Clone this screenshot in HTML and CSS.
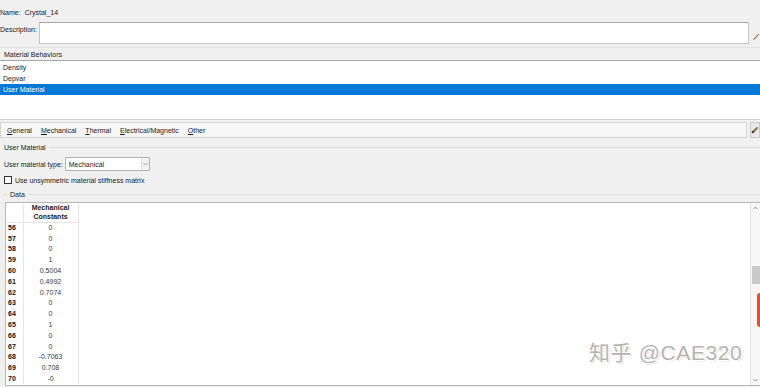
FILE: index.html
```html
<!DOCTYPE html>
<html lang="en">

<head>
    <meta charset="utf-8">
    <title>Edit Material</title>
    <link rel="stylesheet" href="styles.css">
</head>

<body>
    <div class="name-row">
        <span class="label">Name:</span>
        <span>Crystal_14</span>
    </div>

    <div class="desc-row">
        <span class="label desc-label">Description:</span>
        <div class="textbox"></div>
        <svg class="edit-icon" width="7" height="7" viewBox="0 0 7 7">
            <path d="M1 6 L6 1" stroke="#b98a5a" stroke-width="1.2" />
            <path d="M0.5 6.5 L1.8 5.2" stroke="#6b4a2a" stroke-width="1" />
        </svg>
    </div>

    <div class="behaviors-title">Material Behaviors</div>
    <ul class="behaviors">
        <li>Density</li>
        <li>Depvar</li>
        <li class="selected">User Material</li>
    </ul>

    <div class="menu-row">
        <div class="menubar">
            <span><u>G</u>eneral</span>
            <span><u>M</u>echanical</span>
            <span><u>T</u>hermal</span>
            <span><u>E</u>lectrical/Magnetic</span>
            <span><u>O</u>ther</span>
        </div>
        <div class="menu-btn">
            <svg width="8" height="8" viewBox="0 0 8 8">
                <path d="M2 6 L6 2" stroke="#8a6a4a" stroke-width="2" stroke-linecap="round" />
                <circle cx="2" cy="6" r="1.3" fill="#5a3a20" />
            </svg>
        </div>
    </div>

    <div class="legend um-legend"><span>User Material</span></div>

    <div class="type-row">
        <span>User material type:</span>
        <div class="combo">
            <span class="combo-text">Mechanical</span>
            <span class="combo-arrow">
                <svg width="5" height="4" viewBox="0 0 5 4">
                    <path d="M0.5 1 L2.5 3 L4.5 1" fill="none" stroke="#888" stroke-width="0.8" />
                </svg>
            </span>
        </div>
    </div>

    <div class="check-row">
        <span class="checkbox"></span>
        <span>Use unsymmetric material stiffness matrix</span>
    </div>

    <div class="legend data-legend"><span>Data</span></div>

    <div class="data-box">
        <table class="data-table">
            <tr>
                <th class="corner"></th>
                <th class="col-head">Mechanical<br>Constants</th>
            </tr>
            <tr><td class="row-num">56</td><td>0</td></tr>
            <tr><td class="row-num">57</td><td>0</td></tr>
            <tr><td class="row-num">58</td><td>0</td></tr>
            <tr><td class="row-num">59</td><td>1</td></tr>
            <tr><td class="row-num">60</td><td>0.5004</td></tr>
            <tr><td class="row-num">61</td><td>0.4992</td></tr>
            <tr><td class="row-num">62</td><td>0.7074</td></tr>
            <tr><td class="row-num">63</td><td>0</td></tr>
            <tr><td class="row-num">64</td><td>0</td></tr>
            <tr><td class="row-num">65</td><td>1</td></tr>
            <tr><td class="row-num">66</td><td>0</td></tr>
            <tr><td class="row-num">67</td><td>0</td></tr>
            <tr><td class="row-num">68</td><td>-0.7063</td></tr>
            <tr><td class="row-num">69</td><td>0.708</td></tr>
            <tr><td class="row-num">70</td><td>-0</td></tr>
        </table>
        <div class="spacer"></div>
        <div class="scrollbar">
            <span class="arrow">
                <svg width="5" height="4" viewBox="0 0 5 4">
                    <path d="M0.5 3 L2.5 1 L4.5 3" fill="none" stroke="#777" stroke-width="0.8" />
                </svg>
            </span>
            <div class="track">
                <div class="thumb"></div>
            </div>
            <span class="arrow">
                <svg width="5" height="4" viewBox="0 0 5 4">
                    <path d="M0.5 1 L2.5 3 L4.5 1" fill="none" stroke="#777" stroke-width="0.8" />
                </svg>
            </span>
        </div>
    </div>

    <div class="side-tab"></div>
    <div class="watermark">知乎 @CAE320</div>
</body>

</html>
```

FILE: styles.css
```css
:root {
    --bg: #f0f0f0;
    --line: #dadada;
    --border: #b8b8b8;
    --select: #0078d7;
    --text: #1a1a1a;
}

*,
::before,
::after {
    box-sizing: border-box;
    margin: 0;
    padding: 0;
}

body {
    width: 760px;
    height: 387px;
    overflow: hidden;
    position: relative;
    background: var(--bg);
    color: var(--text);
    font: 7px/1 "Liberation Sans", Arial, sans-serif;
}

/* name + description */
.name-row {
    display: flex;
    align-items: center;
    gap: 4px;
    height: 22px;
    padding-top: 2px;
}

.desc-row {
    display: flex;
    height: 22px;
}

.desc-label {
    width: 39px;
    padding-top: 4px;
}

.textbox {
    width: 710px;
    height: 22px;
    background: #fff;
    border: 1px solid #c4c4c4;
    border-top-color: #a8a8a8;
}

.edit-icon {
    margin: 11px 0 0 4px;
}

/* behaviours list */
.behaviors-title {
    margin-top: 3px;
    height: 13px;
    padding: 3px 0 0 4px;
    border-top: 1px solid #e2e2e2;
}

.behaviors {
    list-style: none;
    height: 60px;
    padding-top: 1px;
    background: #fff;
    border-top: 1px solid #a9a9a9;
    border-bottom: 1px solid #cfcfcf;
}

.behaviors li {
    height: 11px;
    line-height: 11px;
    padding-left: 3px;
}

.behaviors .selected {
    background: var(--select);
    color: #fff;
}

/* menu */
.menu-row {
    display: flex;
    margin-top: 2px;
    height: 16px;
}

.menubar {
    width: 748px;
    display: flex;
    align-items: center;
    gap: 9px;
    padding-left: 6px;
    background: #f6f6f6;
    border: 1px solid #d4d4d4;
}

.menu-btn {
    width: 10px;
    margin-left: 3px;
    display: flex;
    align-items: center;
    justify-content: center;
    background: #e9e9e9;
    border: 1px solid #c9c9c9;
}

/* group titles */
.legend {
    display: flex;
    align-items: center;
    gap: 3px;
    height: 13px;
    padding-left: 4px;
}

.legend::after {
    content: "";
    flex: 1;
    border-top: 1px solid var(--line);
}

.um-legend {
    margin-top: 3px;
}

.data-legend {
    margin-top: 2px;
    height: 14px;
    padding-left: 4px;
}

.data-legend::before {
    content: "";
    width: 3px;
    border-top: 1px solid var(--line);
}

/* user material controls */
.type-row {
    display: flex;
    align-items: center;
    gap: 2px;
    margin-top: 3px;
    height: 14px;
    padding-left: 4px;
}

.combo {
    display: flex;
    width: 85px;
    height: 14px;
    background: #fff;
    border: 1px solid #b4b4b4;
}

.combo-text {
    flex: 1;
    padding: 3px 0 0 3px;
}

.combo-arrow {
    width: 8px;
    display: flex;
    align-items: center;
    justify-content: center;
    background: #f2f2f2;
    border-left: 1px solid #dcdcdc;
}

.check-row {
    display: flex;
    align-items: center;
    gap: 3px;
    margin-top: 4px;
    height: 10px;
    padding-left: 4px;
}

.checkbox {
    width: 8px;
    height: 8px;
    background: #fff;
    border: 1px solid #333;
}

/* data table */
.data-box {
    display: flex;
    margin: 1px 0 0 5px;
    height: 184px;
    background: #fff;
    border: 1px solid var(--border);
    border-right: none;
}

.data-table {
    border-collapse: collapse;
    align-self: flex-start;
}

.data-table th,
.data-table td {
    padding: 0;
    border-right: 1px solid #e6e6e6;
}

.data-table th {
    height: 19px;
    border-bottom: 1px solid #e6e6e6;
}

.corner {
    width: 17px;
}

.col-head {
    width: 55px;
    font-weight: bold;
    line-height: 9px;
}

.data-table td {
    height: 10.8px;
    text-align: center;
    color: #3a3a3a;
}

.data-table .row-num {
    text-align: left;
    padding-left: 2px;
    font-weight: bold;
    color: #111;
}

.spacer {
    flex: 1;
}

.scrollbar {
    width: 10px;
    display: flex;
    flex-direction: column;
    background: #f7f7f7;
    border-left: 1px solid #e2e2e2;
}

.arrow {
    height: 10px;
    display: flex;
    align-items: center;
    justify-content: center;
}

.track {
    flex: 1;
}

.thumb {
    margin: 53px auto 0;
    width: 8px;
    height: 18px;
    background: #c9c9c9;
}

/* overlays */
.side-tab {
    position: absolute;
    left: 757px;
    top: 293px;
    width: 6px;
    height: 34px;
    border-radius: 3px 0 0 3px;
    background: #e2532d;
}

.watermark {
    position: absolute;
    left: 589px;
    top: 342px;
    font: 21px/1 "Liberation Sans", "Noto Sans CJK SC", sans-serif;
    letter-spacing: 0.6px;
    color: #b4b4b4;
    text-shadow: 1px 1px 0 #fff, -1px -1px 0 #fff, 1px -1px 0 #fff, -1px 1px 0 #fff, 1px 1px 1px #888;
}
```
